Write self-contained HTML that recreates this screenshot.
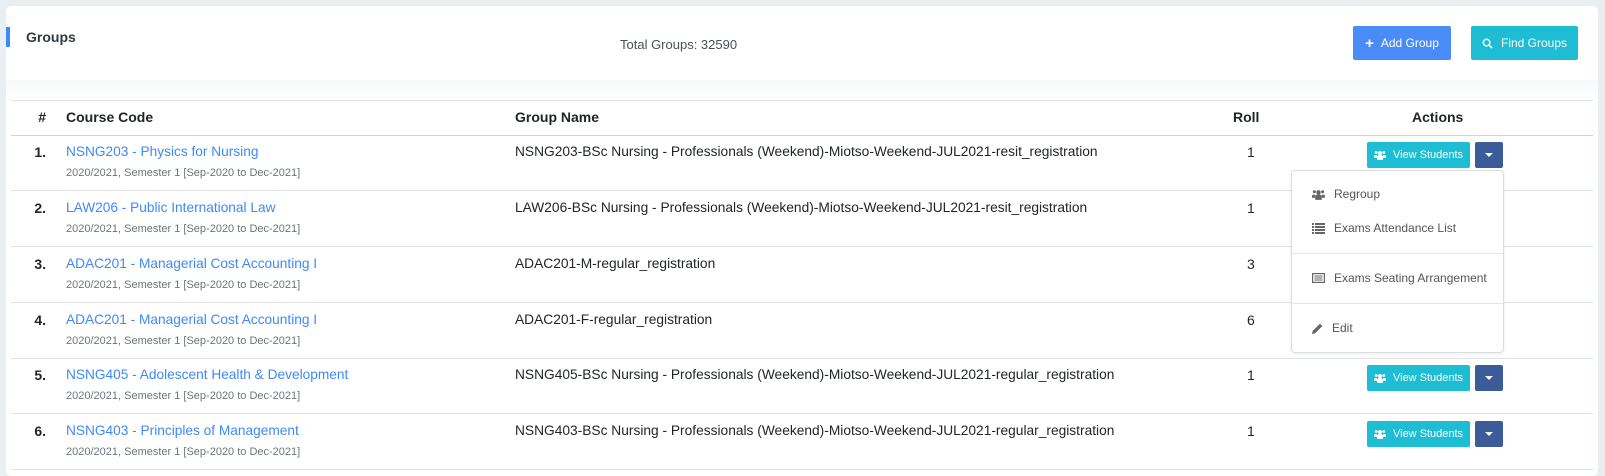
<!DOCTYPE html>
<html><head><meta charset="utf-8"><style>
*{box-sizing:border-box;margin:0;padding:0}
body{width:1605px;height:470px;background:#e9eef1;font-family:"Liberation Sans",Arial,sans-serif;position:relative;overflow:hidden;color:#212529}
.card{position:absolute;left:6px;top:6px;width:1592px;height:470px;background:#fff;border-radius:5px}
.hdrgrad{position:absolute;left:6px;top:80px;width:1592px;height:20px;background:linear-gradient(#f7f8f9,#fff)}
.a{position:absolute;white-space:nowrap}
.btn{position:absolute;color:#fff;font-size:12px;display:flex;align-items:center;justify-content:center;border-radius:2px}
.line{position:absolute;left:11px;width:1582px;height:1px;background:#dee2e6}
.num{font-size:14px;font-weight:bold;width:36px;text-align:right;left:10px}
.link{font-size:13.7px;color:#3d8af7;left:66px}
.sub{font-size:11px;color:#6c757d;left:66px}
.gn{font-size:13.75px;left:515px}
.roll{font-size:14px;left:1247px}
.vs{background:#1fbdd3;width:103px;height:26px;left:1367px;font-size:11px}
.tg{background:#3c5b99;width:28px;height:26px;left:1475px}
.car{width:0;height:0;border-left:4px solid transparent;border-right:4px solid transparent;border-top:4px solid #fff}
.menu{position:absolute;left:1291px;top:170px;width:213px;height:183px;background:#fff;border:1px solid #d9dde1;border-radius:4px;box-shadow:0 1px 3px rgba(0,0,0,.08)}
.mi{position:absolute;left:20px;font-size:12px;color:#555;display:flex;align-items:center;gap:9px}
.md{position:absolute;left:0;width:211px;height:1px;background:#e5e8eb}
</style></head><body>
<div class="card"></div>
<div class="hdrgrad"></div>
<div class="a" style="left:6px;top:27px;width:4px;height:20px;background:#3d8af7"></div>
<div class="a" style="left:26px;top:29px;font-size:14px;font-weight:bold;color:#343a40">Groups</div>
<div class="a" style="left:620px;top:37px;font-size:13px;color:#495057">Total Groups: 32590</div>
<div class="btn" style="left:1353px;top:26px;width:98px;height:34px;background:#4a8cf7"><b style="font-size:15px;margin-right:7px">+</b>Add Group</div>
<div class="btn" style="left:1471px;top:26px;width:107px;height:34px;background:#1fbdd3"><svg width="11" height="11" viewBox="0 0 12 12" style="margin-right:8px"><circle cx="5" cy="5" r="3.6" fill="none" stroke="#fff" stroke-width="1.6"/><path d="M7.7 7.7L11 11" stroke="#fff" stroke-width="1.8"/></svg>Find Groups</div>

<div class="line" style="top:100px"></div>
<div class="a" style="left:10px;width:36px;text-align:right;top:109px;font-size:14px;font-weight:bold">#</div>
<div class="a" style="left:66px;top:109px;font-size:14px;font-weight:bold">Course Code</div>
<div class="a" style="left:515px;top:109px;font-size:14px;font-weight:bold">Group Name</div>
<div class="a" style="left:1233px;top:109px;font-size:14px;font-weight:bold">Roll</div>
<div class="a" style="left:1412px;top:109px;font-size:14px;font-weight:bold">Actions</div>
<div class="line" style="top:135px;background:#cfd4d9"></div>

<div class="a num" style="top:144px">1.</div><div class="a link" style="top:144px">NSNG203 - Physics for Nursing</div><div class="a sub" style="top:167px">2020/2021, Semester 1 [Sep-2020 to Dec-2021]</div><div class="a gn" style="top:144px">NSNG203-BSc Nursing - Professionals (Weekend)-Miotso-Weekend-JUL2021-resit_registration</div><div class="a roll" style="top:144px">1</div>
<div class="line" style="top:190px"></div>
<div class="a num" style="top:200px">2.</div><div class="a link" style="top:200px">LAW206 - Public International Law</div><div class="a sub" style="top:223px">2020/2021, Semester 1 [Sep-2020 to Dec-2021]</div><div class="a gn" style="top:200px">LAW206-BSc Nursing - Professionals (Weekend)-Miotso-Weekend-JUL2021-resit_registration</div><div class="a roll" style="top:200px">1</div>
<div class="line" style="top:246px"></div>
<div class="a num" style="top:256px">3.</div><div class="a link" style="top:256px">ADAC201 - Managerial Cost Accounting I</div><div class="a sub" style="top:279px">2020/2021, Semester 1 [Sep-2020 to Dec-2021]</div><div class="a gn" style="top:256px">ADAC201-M-regular_registration</div><div class="a roll" style="top:256px">3</div>
<div class="line" style="top:302px"></div>
<div class="a num" style="top:312px">4.</div><div class="a link" style="top:312px">ADAC201 - Managerial Cost Accounting I</div><div class="a sub" style="top:335px">2020/2021, Semester 1 [Sep-2020 to Dec-2021]</div><div class="a gn" style="top:312px">ADAC201-F-regular_registration</div><div class="a roll" style="top:312px">6</div>
<div class="line" style="top:358px"></div>
<div class="a num" style="top:367px">5.</div><div class="a link" style="top:367px">NSNG405 - Adolescent Health &amp; Development</div><div class="a sub" style="top:390px">2020/2021, Semester 1 [Sep-2020 to Dec-2021]</div><div class="a gn" style="top:367px">NSNG405-BSc Nursing - Professionals (Weekend)-Miotso-Weekend-JUL2021-regular_registration</div><div class="a roll" style="top:367px">1</div>
<div class="line" style="top:413px"></div>
<div class="a num" style="top:423px">6.</div><div class="a link" style="top:423px">NSNG403 - Principles of Management</div><div class="a sub" style="top:446px">2020/2021, Semester 1 [Sep-2020 to Dec-2021]</div><div class="a gn" style="top:423px">NSNG403-BSc Nursing - Professionals (Weekend)-Miotso-Weekend-JUL2021-regular_registration</div><div class="a roll" style="top:423px">1</div>
<div class="line" style="top:469px"></div>

<div class="btn vs" style="top:142px"><svg width="12" height="10" viewBox="0 0 12 10" style="margin-right:7px"><circle cx="6" cy="3" r="2" fill="#fff"/><circle cx="2.2" cy="2.5" r="1.4" fill="#fff"/><circle cx="9.8" cy="2.5" r="1.4" fill="#fff"/><path d="M3 10V7.5a3 3 0 0 1 6 0V10zM0 8V6a2 2 0 0 1 3-.5V8zM12 8V6a2 2 0 0 0-3-.5V8z" fill="#fff"/></svg>View Students</div>
<div class="btn tg" style="top:142px"><div class="car"></div></div>
<div class="btn vs" style="top:365px"><svg width="12" height="10" viewBox="0 0 12 10" style="margin-right:7px"><circle cx="6" cy="3" r="2" fill="#fff"/><circle cx="2.2" cy="2.5" r="1.4" fill="#fff"/><circle cx="9.8" cy="2.5" r="1.4" fill="#fff"/><path d="M3 10V7.5a3 3 0 0 1 6 0V10zM0 8V6a2 2 0 0 1 3-.5V8zM12 8V6a2 2 0 0 0-3-.5V8z" fill="#fff"/></svg>View Students</div>
<div class="btn tg" style="top:365px"><div class="car"></div></div>
<div class="btn vs" style="top:421px"><svg width="12" height="10" viewBox="0 0 12 10" style="margin-right:7px"><circle cx="6" cy="3" r="2" fill="#fff"/><circle cx="2.2" cy="2.5" r="1.4" fill="#fff"/><circle cx="9.8" cy="2.5" r="1.4" fill="#fff"/><path d="M3 10V7.5a3 3 0 0 1 6 0V10zM0 8V6a2 2 0 0 1 3-.5V8zM12 8V6a2 2 0 0 0-3-.5V8z" fill="#fff"/></svg>View Students</div>
<div class="btn tg" style="top:421px"><div class="car"></div></div>

<div class="menu">
<div class="mi" style="top:16px"><svg width="13" height="11" viewBox="0 0 12 10"><circle cx="6" cy="3" r="2" fill="#666"/><circle cx="2.2" cy="2.5" r="1.4" fill="#666"/><circle cx="9.8" cy="2.5" r="1.4" fill="#666"/><path d="M3 10V7.5a3 3 0 0 1 6 0V10zM0 8V6a2 2 0 0 1 3-.5V8zM12 8V6a2 2 0 0 0-3-.5V8z" fill="#666"/></svg>Regroup</div>
<div class="mi" style="top:50px"><svg width="13" height="11" viewBox="0 0 13 11"><path d="M0 0h2v2H0zM3 0h10v2H3zM0 3h2v2H0zM3 3h10v2H3zM0 6h2v2H0zM3 6h10v2H3zM0 9h2v2H0zM3 9h10v2H3z" fill="#666"/></svg>Exams Attendance List</div>
<div class="md" style="top:82px"></div>
<div class="mi" style="top:100px"><svg width="13" height="10" viewBox="0 0 13 10"><rect x=".6" y=".6" width="11.8" height="8.8" fill="none" stroke="#666" stroke-width="1.2"/><path d="M2.5 3h8M2.5 5h8M2.5 7h8" stroke="#666"/></svg>Exams Seating Arrangement</div>
<div class="md" style="top:132px"></div>
<div class="mi" style="top:150px"><svg width="11" height="11" viewBox="0 0 11 11"><path d="M0 11l.6-3L8 .6l2.4 2.4L3 10.4z" fill="#666"/></svg>Edit</div>
</div>
</body></html>
